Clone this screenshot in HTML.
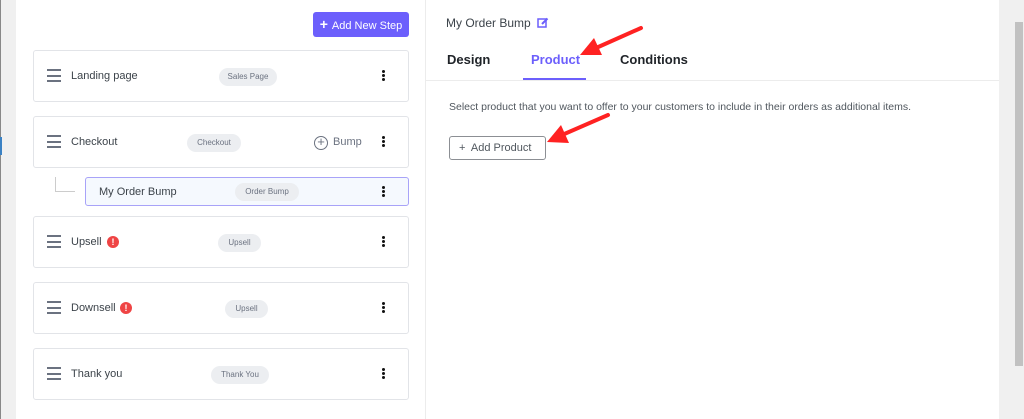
<!DOCTYPE html>
<html><head><meta charset="utf-8"><style>
*{box-sizing:border-box;margin:0;padding:0}
body{width:1024px;height:419px;overflow:hidden;background:#fff;font-family:"Liberation Sans",sans-serif;position:relative;color:#444}
.abs{position:absolute}
.card{position:absolute;left:33px;width:376px;height:52px;border:1px solid #e2e4e8;border-radius:3px;background:#fff}
.ham{position:absolute;left:13px;top:18px;width:14px;height:13px}
.ham i{display:block;height:2px;background:#6b7280;margin-bottom:3.5px}
.name{position:absolute;left:37px;top:19px;font-size:11px;color:#3c434a}
.pill{position:absolute;top:17px;height:18px;border-radius:9px;background:#eceef1;font-size:8px;color:#6b7280;text-align:center;line-height:18px}
.dots{position:absolute;left:348px;top:19px;width:3px}
.dots i{display:block;width:3px;height:3px;border-radius:50%;background:#111;margin-bottom:1px}
.warn{position:absolute;top:19px;width:12px;height:12px;border-radius:50%;background:#ef4444;color:#fff;font-size:9px;font-weight:bold;text-align:center;line-height:12px}
</style></head><body>
<div class="abs" style="left:0;top:0;width:16px;height:419px;background:#f0f0f0;border-left:1px solid #888"></div>
<div class="abs" style="left:0;top:137px;width:2px;height:18px;background:#3b82c4"></div>
<div class="abs" style="left:999px;top:0;width:25px;height:419px;background:#f0f0f0"></div>
<div class="abs" style="left:1015px;top:22px;width:8px;height:344px;background:#c1c1c1"></div>
<div class="abs" style="left:425px;top:0;width:1px;height:419px;background:#ececec"></div>

<div class="abs" style="left:313px;top:12px;width:96px;height:25px;background:#6c5ffc;border-radius:3px;color:#fff;font-size:11px;line-height:25px;text-align:center"><b style="font-size:14px;margin-right:4px">+</b>Add New Step</div>

<div class="card" style="top:50px"><div class="ham"><i></i><i></i><i></i></div><div class="name">Landing page</div><div class="pill" style="left:185px;width:58px">Sales Page</div><div class="dots"><i></i><i></i><i></i></div></div>

<div class="card" style="top:116px"><div class="ham"><i></i><i></i><i></i></div><div class="name">Checkout</div><div class="pill" style="left:153px;width:54px">Checkout</div>
<div class="abs" style="left:280px;top:19px;width:14px;height:14px;border:1.5px solid #6b7280;border-radius:50%;color:#6b7280;font-size:13px;line-height:10px;text-align:center">+</div>
<div class="abs" style="left:299px;top:19px;font-size:11px;color:#6b7280">Bump</div>
<div class="dots"><i></i><i></i><i></i></div></div>

<div class="abs" style="left:55px;top:177px;width:20px;height:15px;border-left:1px solid #ccc;border-bottom:1px solid #ccc"></div>
<div class="abs" style="left:85px;top:177px;width:324px;height:29px;border:1px solid #a8a3f8;border-radius:3px;background:#f5f9fe">
<div class="abs" style="left:13px;top:8px;font-size:11px;color:#3c434a">My Order Bump</div>
<div class="pill" style="top:5px;left:149px;width:64px">Order Bump</div>
<div class="dots" style="left:296px;top:8px"><i></i><i></i><i></i></div></div>

<div class="card" style="top:216px"><div class="ham"><i></i><i></i><i></i></div><div class="name">Upsell</div><div class="warn" style="left:73px">!</div><div class="pill" style="left:184px;width:43px">Upsell</div><div class="dots"><i></i><i></i><i></i></div></div>
<div class="card" style="top:282px"><div class="ham"><i></i><i></i><i></i></div><div class="name">Downsell</div><div class="warn" style="left:86px">!</div><div class="pill" style="left:191px;width:43px">Upsell</div><div class="dots"><i></i><i></i><i></i></div></div>
<div class="card" style="top:348px"><div class="ham"><i></i><i></i><i></i></div><div class="name">Thank you</div><div class="pill" style="left:177px;width:58px">Thank You</div><div class="dots"><i></i><i></i><i></i></div></div>

<div class="abs" style="left:446px;top:16px;font-size:12px;color:#3c434a">My Order Bump</div>
<svg class="abs" style="left:537px;top:17px" width="12" height="11" viewBox="0 0 12 11"><rect x="1" y="2" width="8" height="8" fill="none" stroke="#6c5ffc" stroke-width="1.5"/><path d="M5 7 L10.5 1.5" stroke="#6c5ffc" stroke-width="2"/></svg>
<div class="abs" style="left:447px;top:52px;font-size:13px;font-weight:bold;color:#1f2328">Design</div>
<div class="abs" style="left:531px;top:52px;font-size:13px;font-weight:bold;color:#6c5ffc">Product</div>
<div class="abs" style="left:523px;top:78px;width:63px;height:2px;background:#6c5ffc"></div>
<div class="abs" style="left:620px;top:52px;font-size:13px;font-weight:bold;color:#1f2328">Conditions</div>
<div class="abs" style="left:426px;top:80px;width:573px;height:1px;background:#ececec"></div>
<div class="abs" style="left:449px;top:101px;font-size:10.5px;color:#50575e;white-space:nowrap">Select product that you want to offer to your customers to include in their orders as additional items.</div>
<div class="abs" style="left:449px;top:136px;width:97px;height:24px;border:1px solid #8c8f94;border-radius:3px;font-size:11px;line-height:22px;color:#50575e;padding-left:9px">+&nbsp; Add Product</div>

<svg class="abs" style="left:0;top:0" width="1024" height="419">
<path d="M641 28 L596 48" stroke="#f22" stroke-width="4" stroke-linecap="round"/>
<polygon points="580,55 594,38 602,55" fill="#f22"/>
<path d="M608 115 L562 135" stroke="#f22" stroke-width="4" stroke-linecap="round"/>
<polygon points="547,142 561,125 569,143" fill="#f22"/>
</svg>
</body></html>
